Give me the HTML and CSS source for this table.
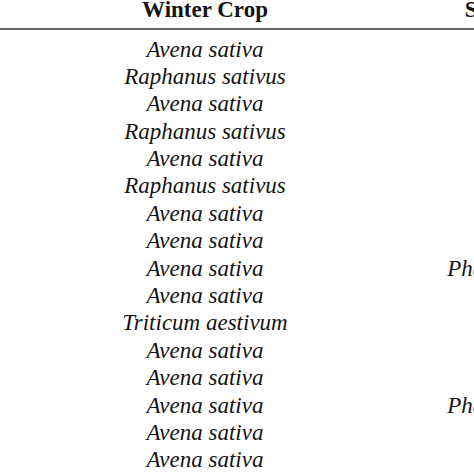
FILE: index.html
```html
<!DOCTYPE html>
<html>
<head>
<meta charset="utf-8">
<link rel="stylesheet" href="styles.css">
</head>
<body>
<div class="table">
  <div class="head">
    <div class="c1">Winter Crop</div>
    <div class="c2">Summer Crop</div>
  </div>
  <div class="body">
    <div class="row"><div class="c1">Avena sativa</div><div class="c2"></div></div>
    <div class="row"><div class="c1">Raphanus sativus</div><div class="c2"></div></div>
    <div class="row"><div class="c1">Avena sativa</div><div class="c2"></div></div>
    <div class="row"><div class="c1">Raphanus sativus</div><div class="c2"></div></div>
    <div class="row"><div class="c1">Avena sativa</div><div class="c2"></div></div>
    <div class="row"><div class="c1">Raphanus sativus</div><div class="c2"></div></div>
    <div class="row"><div class="c1">Avena sativa</div><div class="c2"></div></div>
    <div class="row"><div class="c1">Avena sativa</div><div class="c2"></div></div>
    <div class="row"><div class="c1">Avena sativa</div><div class="c2">Phaseolus vulgaris</div></div>
    <div class="row"><div class="c1">Avena sativa</div><div class="c2"></div></div>
    <div class="row"><div class="c1">Triticum aestivum</div><div class="c2"></div></div>
    <div class="row"><div class="c1">Avena sativa</div><div class="c2"></div></div>
    <div class="row"><div class="c1">Avena sativa</div><div class="c2"></div></div>
    <div class="row"><div class="c1">Avena sativa</div><div class="c2">Phaseolus vulgaris</div></div>
    <div class="row"><div class="c1">Avena sativa</div><div class="c2"></div></div>
    <div class="row"><div class="c1">Avena sativa</div><div class="c2"></div></div>
  </div>
</div>
</body>
</html>
```
FILE: styles.css
```css
html, body {
  margin: 0;
  padding: 0;
  background: #fff;
  overflow: hidden;
}
body {
  width: 474px;
  height: 474px;
  font-family: "Liberation Serif", "Times New Roman", serif;
  color: #141414;
}
.table {
  width: 660px;
}
.head {
  display: grid;
  grid-template-columns: 410px 250px;
  font-weight: bold;
  font-size: 23px;
  line-height: 18px;
  padding-top: 1px;
  padding-bottom: 9px;
  border-bottom: 2px solid #666;
}
.body {
  padding-top: 5.5px;
}
.row {
  display: grid;
  grid-template-columns: 410px 250px;
  font-style: italic;
  font-size: 23px;
  line-height: 27.4px;
  height: 27.4px;
}
.c1, .c2 {
  text-align: center;
  white-space: nowrap;
}
```
